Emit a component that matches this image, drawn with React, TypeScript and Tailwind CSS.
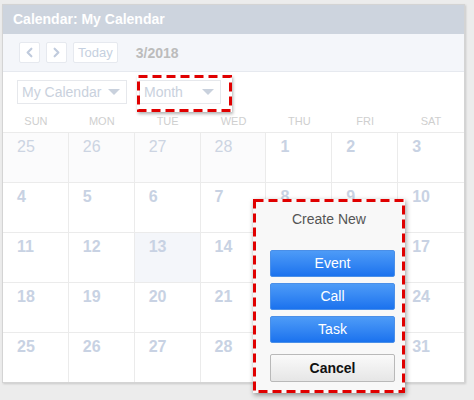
import { ChevronLeft, ChevronRight } from 'lucide-react'

const days = ['SUN', 'MON', 'TUE', 'WED', 'THU', 'FRI', 'SAT']

const weeks: { n: number; prev?: boolean; today?: boolean }[][] = [
  [{ n: 25, prev: true }, { n: 26, prev: true }, { n: 27, prev: true }, { n: 28, prev: true }, { n: 1 }, { n: 2 }, { n: 3 }],
  [4, 5, 6, 7, 8, 9, 10].map((n) => ({ n })),
  [11, 12, 13, 14, 15, 16, 17].map((n) => ({ n, today: n === 13 })),
  [18, 19, 20, 21, 22, 23, 24].map((n) => ({ n })),
  [25, 26, 27, 28, 29, 30, 31].map((n) => ({ n })),
]

function Select({ label, width }: { label: string; width: string }) {
  return (
    <div className={`${width} h-[24px] border border-[#e6e8ec] bg-white flex items-center justify-between pl-[4px] pr-[6px]`}>
      <span className="text-[14px] text-[#c9d1dd]">{label}</span>
      <span className="w-0 h-0 border-l-[6px] border-r-[6px] border-t-[6px] border-l-transparent border-r-transparent border-t-[#c9d1dd]" />
    </div>
  )
}

// red dashed annotation frame
function Dashed() {
  return (
    <svg className="absolute inset-0 w-full h-full pointer-events-none overflow-visible">
      <rect x="1.5" y="1.5" width="calc(100% - 3px)" height="calc(100% - 3px)" fill="none" stroke="#e00000" strokeWidth="3" strokeDasharray="9 5" />
    </svg>
  )
}

export default function App() {
  return (
    <div className="relative w-[474px] h-[400px] bg-[#ececec] overflow-hidden font-['Liberation_Sans',Arial,sans-serif]">
      <div className="ml-[2px] mt-[4px] w-[463px] bg-white border border-[#d4d4d4] shadow-[1px_1px_2px_rgba(0,0,0,0.15)]">
        {/* Header */}
        <div className="h-[29px] bg-[#cdd4de] flex items-center pl-[10px] text-white font-bold text-[14px]">
          Calendar: My Calendar
        </div>

        {/* Toolbar */}
        <div className="h-[38px] bg-[#f4f6fa] border-b border-[#e6e9ef] flex items-center pl-[16px]">
          <button className="w-[21px] h-[21px] bg-white border border-[#e6e9ef] rounded-[2px] flex items-center justify-center">
            <ChevronLeft size={15} strokeWidth={3.5} color="#c0cbdd" />
          </button>
          <button className="ml-[6px] w-[21px] h-[21px] bg-white border border-[#e6e9ef] rounded-[2px] flex items-center justify-center">
            <ChevronRight size={15} strokeWidth={3.5} color="#c0cbdd" />
          </button>
          <button className="ml-[6px] h-[21px] px-[4px] bg-white border border-[#e6e9ef] rounded-[2px] text-[13px] text-[#c5d0e0] leading-none">
            Today
          </button>
          <span className="ml-[18px] mt-[2px] text-[14px] font-bold text-[#bcbcbc]">3/2018</span>
        </div>

        {/* Selects */}
        <div className="flex items-center gap-[12px] pl-[14px] pt-[8px]">
          <Select label="My Calendar" width="w-[110px]" />
          <Select label="Month" width="w-[82px]" />
        </div>

        {/* Weekday row */}
        <div className="grid grid-cols-7 mt-[6px] h-[22px] items-center">
          {days.map((d) => (
            <div key={d} className="text-center text-[11px] text-[#cfcfcf]">
              {d}
            </div>
          ))}
        </div>

        {/* Grid */}
        <div className="border-t border-[#ebebeb]">
          {weeks.map((w, i) => (
            <div key={i} className="grid grid-cols-7 border-b border-[#ebebeb] last:border-b-0">
              {w.map((c, j) => (
                <div
                  key={j}
                  className={`h-[49px] pl-[14px] pt-[2px] border-r border-[#ebebeb] last:border-r-0 text-[16px] ${
                    c.prev ? 'bg-[#fbfbfc] text-[#ccd4e2]' : 'font-bold text-[#c8d2e3]'
                  } ${c.today ? 'bg-[#f4f6fa]' : ''}`}
                >
                  {c.n}
                </div>
              ))}
            </div>
          ))}
        </div>
      </div>

      {/* Annotation around Month select */}
      <div className="absolute left-[137px] top-[75px] w-[95px] h-[37px] shadow-[1px_2px_3px_rgba(0,0,0,0.3)]">
        <Dashed />
      </div>

      {/* Create New popup */}
      <div className="absolute left-[253px] top-[199px] w-[152px] h-[194px] bg-[#f8f8f8] shadow-[1px_2px_5px_rgba(0,0,0,0.4)] flex flex-col items-start pl-[17px]">
        <Dashed />
        <div className="mt-[10px] ml-[22px] text-[14px] text-[#555555]">Create New</div>
        <div className="mt-[20px] flex flex-col gap-[6px]">
          {['Event', 'Call', 'Task'].map((t) => (
            <button
              key={t}
              className="w-[125px] h-[27px] rounded-[2px] border border-[#4a8fe8] bg-gradient-to-b from-[#4d9bf7] to-[#1a72ee] text-white text-[14px]"
            >
              {t}
            </button>
          ))}
        </div>
        <button className="mt-[11px] w-[125px] h-[28px] rounded-[2px] border border-[#b9b9b9] bg-gradient-to-b from-[#fafafa] to-[#e6e6e6] text-[#111111] font-bold text-[14px]">
          Cancel
        </button>
      </div>
    </div>
  )
}
